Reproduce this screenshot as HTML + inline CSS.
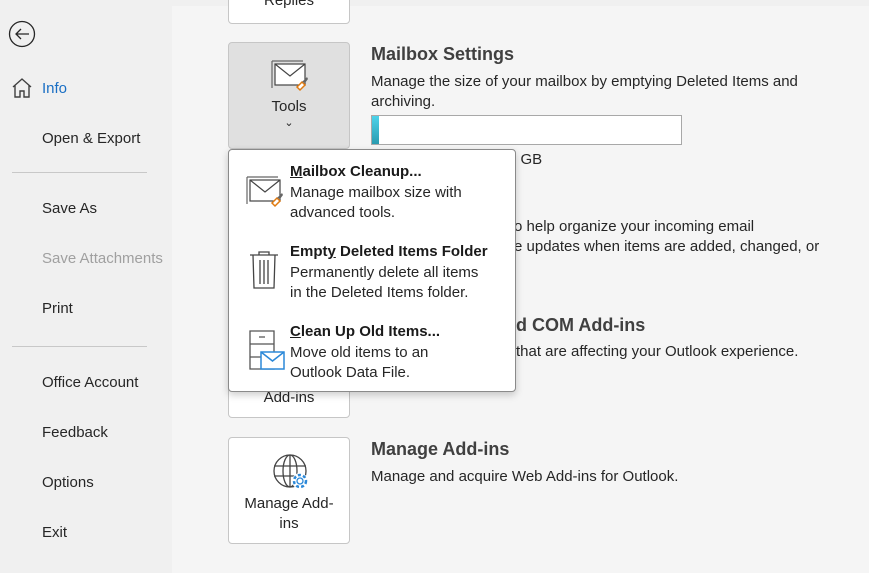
<!DOCTYPE html>
<html><head><style>
*{margin:0;padding:0;box-sizing:border-box}
body{width:869px;height:573px;overflow:hidden;background:#f0f0f0;font-family:"Segoe UI","Liberation Sans",sans-serif;color:#262626;position:relative;font-size:15px}
.a{position:absolute}
.side{font-size:15px;color:#262626}
.main{left:172px;top:6px;width:697px;height:567px;background:#f5f5f5}
.btn{position:absolute;background:#fff;border:1px solid #c6c6c6;border-radius:4px;text-align:center;font-size:15px;color:#262626}
h2{position:absolute;font-size:18px;font-weight:bold;color:#404040}
.t{position:absolute;font-size:15px;line-height:20px;color:#262626}
.menu{left:228px;top:149px;width:288px;height:243px;background:#fff;border:1px solid #8a8a8a;border-radius:4px;box-shadow:0 3px 8px rgba(0,0,0,.2)}
.mi b{display:block;margin-bottom:1px;font-size:15px;color:#1a1a1a}
</style></head><body>
<svg class="a" style="left:8px;top:20px" width="28" height="28" viewBox="0 0 28 28"><circle cx="14" cy="14" r="12.5" fill="none" stroke="#262626" stroke-width="1.3"/><path d="M21 14H8M13 9l-5 5 5 5" fill="none" stroke="#262626" stroke-width="1.3"/></svg>
<svg class="a" style="left:11px;top:77px" width="22" height="22" viewBox="0 0 22 22"><path d="M2 10L11 2l9 8M4 8v12h5v-6h4v6h5V8" fill="none" stroke="#404040" stroke-width="1.4"/></svg>
<div class="a side" style="left:42px;top:80px;color:#1a6fc4">Info</div>
<div class="a side" style="left:42px;top:130px">Open &amp; Export</div>
<div class="a" style="left:12px;top:172px;width:135px;height:1px;background:#c8c8c8"></div>
<div class="a side" style="left:42px;top:200px">Save As</div>
<div class="a side" style="left:42px;top:250px;color:#a0a0a0">Save Attachments</div>
<div class="a side" style="left:42px;top:300px">Print</div>
<div class="a" style="left:12px;top:346px;width:135px;height:1px;background:#c8c8c8"></div>
<div class="a side" style="left:42px;top:374px">Office Account</div>
<div class="a side" style="left:42px;top:424px">Feedback</div>
<div class="a side" style="left:42px;top:474px">Options</div>
<div class="a side" style="left:42px;top:524px">Exit</div>
<div class="a main"></div>
<div class="btn" style="left:228px;top:-10px;width:122px;height:34px;line-height:20px">Replies</div>
<div class="btn" style="left:228px;top:42px;width:122px;height:107px;background:#e0e0e0">
<svg style="position:absolute;left:42px;top:17px" width="38" height="34" viewBox="0 0 38 34"><path d="M1 1h31M1 1v27" stroke="#666" stroke-width="1.2" fill="none"/><rect x="4" y="4" width="30" height="21" fill="#fff" stroke="#444" stroke-width="1.2"/><path d="M4 4l15 12 15-12" fill="none" stroke="#444" stroke-width="1.2"/><path d="M26 27l5-5 3 3-5 5z" fill="#fff" stroke="#e07a10" stroke-width="1.5"/><path d="M31 22l5-5 1 2-3 4z" fill="#666"/></svg>
<div style="position:absolute;top:55px;width:100%">Tools</div>
<div style="position:absolute;top:73px;width:100%;font-size:11px">&#8964;</div></div>
<h2 style="left:371px;top:44px">Mailbox Settings</h2>
<div class="t" style="left:371px;top:72px">Manage the size of your mailbox by emptying Deleted Items and<br>archiving.</div>
<div class="a" style="left:371px;top:115px;width:311px;height:30px;background:#fff;border:1px solid #a8a8a8"><div style="width:7px;height:28px;background:linear-gradient(#4dd3ea,#2a9bb0)"></div></div>
<div class="t" style="left:508px;top:150px">9 GB</div>
<div class="t" style="left:514px;top:217px">o help organize your incoming email<br>e updates when items are added, changed, or</div>
<h2 style="left:516px;top:315px">d COM Add-ins</h2>
<div class="t" style="left:516px;top:342px">that are affecting your Outlook experience.</div>
<div class="btn" style="left:228px;top:380px;width:122px;height:38px;padding-top:8px">Add-ins</div>
<div class="btn" style="left:228px;top:437px;width:122px;height:107px">
<svg style="position:absolute;left:42px;top:14px" width="40" height="40" viewBox="0 0 40 40"><circle cx="19" cy="19" r="16" fill="none" stroke="#444" stroke-width="1.3"/><ellipse cx="19" cy="19" rx="7" ry="16" fill="none" stroke="#444" stroke-width="1.3"/><path d="M3 14h32M3 24h32M19 3v32" stroke="#444" stroke-width="1.3"/><circle cx="29" cy="29" r="8" fill="#fff"/><circle cx="29" cy="29" r="6" fill="none" stroke="#2b88d8" stroke-width="2.5" stroke-dasharray="3 2.2"/><circle cx="29" cy="29" r="3" fill="none" stroke="#2b88d8" stroke-width="1.3"/></svg>
<div style="position:absolute;top:56px;width:100%;line-height:20px">Manage Add-<br>ins</div></div>
<h2 style="left:371px;top:439px">Manage Add-ins</h2>
<div class="t" style="left:371px;top:467px">Manage and acquire Web Add-ins for Outlook.</div>
<div class="a menu">
<svg class="a" style="left:17px;top:26px" width="38" height="34" viewBox="0 0 38 34"><path d="M1 1h31M1 1v27" stroke="#666" stroke-width="1.2" fill="none"/><rect x="4" y="4" width="30" height="21" fill="#fff" stroke="#444" stroke-width="1.2"/><path d="M4 4l15 12 15-12" fill="none" stroke="#444" stroke-width="1.2"/><path d="M26 27l5-5 3 3-5 5z" fill="#fff" stroke="#e07a10" stroke-width="1.5"/><path d="M31 22l5-5 1 2-3 4z" fill="#666"/></svg>
<div class="t mi" style="left:61px;top:12px"><b><u>M</u>ailbox Cleanup...</b>Manage mailbox size with<br>advanced tools.</div>
<svg class="a" style="left:20px;top:100px" width="30" height="40" viewBox="0 0 30 40"><path d="M1 5h28M10 5V2h10v3M4 5l1 33h20l1-33M11 10v24M15 10v24M19 10v24" fill="none" stroke="#444" stroke-width="1.3"/></svg>
<div class="t mi" style="left:61px;top:92px"><b>Empt<u>y</u> Deleted Items Folder</b>Permanently delete all items<br>in the Deleted Items folder.</div>
<svg class="a" style="left:20px;top:180px" width="38" height="42" viewBox="0 0 38 42"><path d="M1 1h24v38H1zM1 14h24M1 27h12M10 7h6" fill="none" stroke="#555" stroke-width="1.3"/><rect x="12" y="22" width="23" height="17" fill="#fff" stroke="#2b88d8" stroke-width="1.5"/><path d="M12 22l11.5 9 11.5-9" fill="none" stroke="#2b88d8" stroke-width="1.5"/></svg>
<div class="t mi" style="left:61px;top:172px"><b><u>C</u>lean Up Old Items...</b>Move old items to an<br>Outlook Data File.</div>
</div>
</body></html>
